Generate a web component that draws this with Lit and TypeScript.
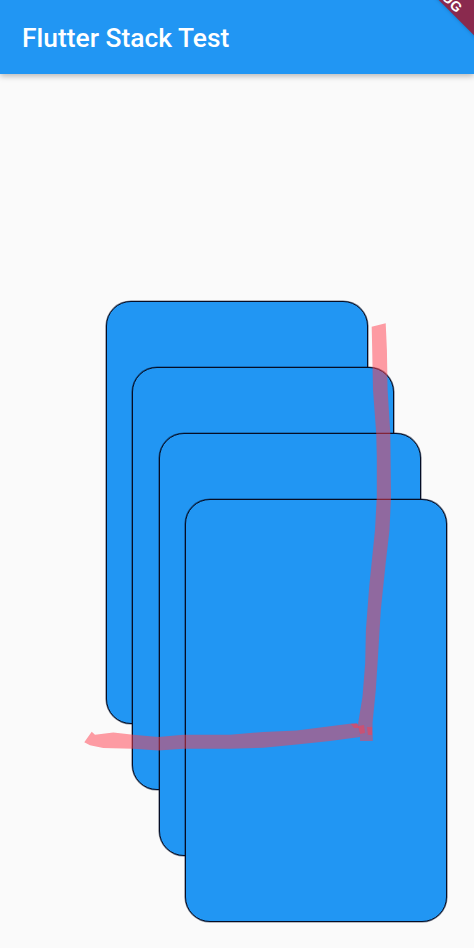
import { LitElement, html, css, svg } from "lit";
import { customElement } from "lit/decorators.js";

const CARDS = [
  { x: 106, y: 301 },
  { x: 132, y: 367 },
  { x: 159, y: 433 },
  { x: 185, y: 499 },
];

const STROKE_SHAPES = [
  // vertical stroke, traced edge by edge from the top tip down to the corner
  "M371.7 326.7 L385.7 323.3 L386.9 350 L387.6 390 L390.3 433 L391 496.7 L389.5 530 L385.7 563 L380.8 610 L378.2 653 L375.8 690 L372.5 723 L372.8 741 L360 741 L360 737 L358 724 L362.5 696.7 L365.2 663 L365.9 630 L369.2 586.7 L375 530 L376.8 496.7 L376.8 456.7 L376.2 433 L373 390 L372 340 Z",
  // horizontal stroke, from the left tip to the corner
  "M84.3 742.3 L91.7 731.7 L95 734.7 L113.3 732.4 L133.3 734.7 L158.3 737 L183.3 734.7 L230 734.7 L263.3 732 L296.7 730.5 L351.7 723.6 L358 724 L360 737 L330 741 L296.7 744.5 L263.3 747.8 L230 748.8 L183.3 748.8 L158.3 750.5 L133.3 748.8 L103.3 748 L90 745.3 Z",
  // small overlaps where the strokes double up at the corner
  "M351 724 L357 723 L359 728 L354 728 Z",
  "M358 726 L364 725 L365 733 L360 734 Z",
  "M367 727 L372 727 L372 735 L368 735 Z",
];

@customElement("app-root")
export class AppRoot extends LitElement {
  static styles = css`
    :host {
      display: block;
      position: relative;
      width: 474px;
      height: 951px;
      overflow: hidden;
      background: #fafafa;
      font-family: Roboto, "Liberation Sans", sans-serif;
    }
    .bar {
      box-sizing: border-box;
      height: 74px;
      padding: 2px 22px 0;
      display: flex;
      align-items: center;
      background: #2196f3;
      color: #fff;
      font-size: 26.4px;
      font-weight: 500;
      box-shadow: 0 2px 6px rgba(0, 0, 0, 0.28);
      position: relative;
    }
    .stage {
      display: grid;
      height: 874px;
      border-bottom: 3px solid #fff;
    }
    .card {
      grid-area: 1 / 1;
      box-sizing: border-box;
      width: 262px;
      height: 423px;
      background: #2196f3;
      border: 1px solid #050d24;
      box-shadow: 0 0 0 0.6px rgba(5, 15, 40, 0.55);
      border-radius: 25px;
    }
    .ink {
      position: absolute;
      inset: 0;
      width: 474px;
      height: 951px;
      pointer-events: none;
    }
    .ink path {
      fill: rgba(255, 60, 75, 0.5);
    }
    .ribbon {
      box-sizing: border-box;
      position: absolute;
      top: -36.84px;
      left: 369.84px;
      width: 160px;
      height: 40px;
      padding-top: 25px;
      transform: rotate(45deg);
      background: #8a2a4e;
      color: #fff;
      font: 700 14px/15px "Liberation Sans", sans-serif;
      letter-spacing: 0.5px;
      text-align: center;
      box-shadow: 0 0 4px rgba(0, 0, 0, 0.25);
    }
  `;

  render() {
    return html`
      <div class="bar">Flutter Stack Test</div>
      <div class="stage">
        ${CARDS.map(
          (c) =>
            html`<div class="card" style="margin: ${c.y - 74}px 0 0 ${c.x}px"></div>`
        )}
      </div>
      <svg class="ink" viewBox="0 0 474 951">
        ${STROKE_SHAPES.map((d) => svg`<path d=${d}></path>`)}
      </svg>
      <div class="ribbon">DEBUG</div>
    `;
  }
}
